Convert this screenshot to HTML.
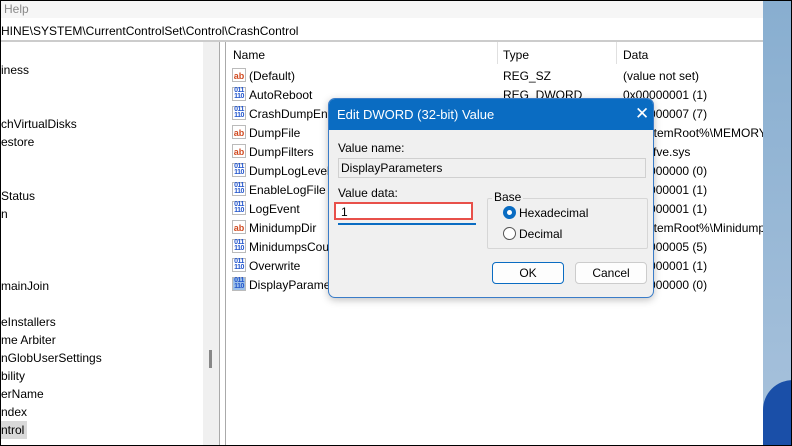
<!DOCTYPE html>
<html><head><style>
*{margin:0;padding:0;box-sizing:border-box}
body{width:792px;height:446px;overflow:hidden;font-family:"Liberation Sans",sans-serif;font-size:12px;color:#000;background:#fff;position:relative}
.a{position:absolute;white-space:nowrap}
.ic{position:absolute;width:14px;height:14px;font-size:9px;font-weight:bold;line-height:14px;text-align:center;border:1px solid #bbb;background:#fff}
.ab{color:#d04a20}
.bn{color:#2255cc;font-size:7px;line-height:6px;letter-spacing:-0.5px}
</style></head><body>
<div class="a" style="left:1px;top:1px;width:762px;height:17px;background:#f6f6f6"></div>
<div class="a" style="left:4px;top:2px;color:#888">Help</div>
<div class="a" style="left:1px;top:18px;width:762px;height:24px;background:#fff;border-bottom:2px solid #ccc"></div>
<div class="a" style="left:1px;top:24px">HINE\SYSTEM\CurrentControlSet\Control\CrashControl</div>
<div class="a" style="left:203px;top:42px;width:16px;height:404px;background:#f0f0f0"></div>
<div class="a" style="left:209px;top:350px;width:3px;height:18px;background:#888"></div>
<div class="a" style="left:219px;top:42px;width:7px;height:404px;background:#fff;border-left:1px solid #aaa;border-right:1px solid #aaa"></div>
<div class="a" style="left:1px;top:63px">iness</div>
<div class="a" style="left:1px;top:117px">chVirtualDisks</div>
<div class="a" style="left:1px;top:135px">estore</div>
<div class="a" style="left:1px;top:189px">Status</div>
<div class="a" style="left:1px;top:207px">n</div>
<div class="a" style="left:1px;top:279px">mainJoin</div>
<div class="a" style="left:1px;top:315px">eInstallers</div>
<div class="a" style="left:1px;top:333px">me Arbiter</div>
<div class="a" style="left:1px;top:351px">nGlobUserSettings</div>
<div class="a" style="left:1px;top:369px">bility</div>
<div class="a" style="left:1px;top:387px">erName</div>
<div class="a" style="left:1px;top:405px">ndex</div>
<div class="a" style="left:1px;top:421px;width:26px;height:18px;background:#d9d9d9"></div>
<div class="a" style="left:1px;top:423px">ntrol</div>
<div class="a" style="left:233px;top:48px">Name</div>
<div class="a" style="left:497px;top:42px;width:1px;height:22px;background:#e0e0e0"></div>
<div class="a" style="left:503px;top:48px">Type</div>
<div class="a" style="left:616px;top:42px;width:1px;height:22px;background:#e0e0e0"></div>
<div class="a" style="left:623px;top:48px">Data</div>
<div id="rows"></div>
<script>
var r=[["ab","(Default)","REG_SZ","(value not set)"],["b","AutoReboot","REG_DWORD","0x00000001 (1)"],["b","CrashDumpEnabled","","0x00000007 (7)"],["ab","DumpFile","","%SystemRoot%\\MEMORY.DMP"],["ab","DumpFilters","","dumpfve.sys"],["b","DumpLogLevel","","0x00000000 (0)"],["b","EnableLogFile","","0x00000001 (1)"],["b","LogEvent","","0x00000001 (1)"],["ab","MinidumpDir","","%SystemRoot%\\Minidump"],["b","MinidumpsCount","","0x00000005 (5)"],["b","Overwrite","","0x00000001 (1)"],["b","DisplayParameters","","0x00000000 (0)"]];
var h="";r.forEach(function(x,i){var y=68+i*19;
h+='<div class="ic '+(x[0]=="ab"?"ab":"bn")+'" style="left:232px;top:'+y+'px;'+(i==11?'background:#9cc0e8;':'')+'">'+(x[0]=="ab"?"ab":"011<br>110")+'</div>';
h+='<div class="a" style="left:249px;top:'+(y+1)+'px">'+x[1]+'</div>';
if(x[2])h+='<div class="a" style="left:503px;top:'+(y+1)+'px">'+x[2]+'</div>';
h+='<div class="a" style="left:623px;top:'+(y+1)+'px">'+x[3]+'</div>';});
document.getElementById("rows").innerHTML=h;
</script>
<div class="a" style="left:763px;top:0;width:29px;height:446px;background:linear-gradient(#88aed0,#a8c2dc);overflow:hidden"><div class="a" style="left:0;top:380px;width:60px;height:80px;background:#1a4fa8;border-radius:30px 0 0 0"></div></div>
<div class="a" style="left:0;top:0;width:792px;height:446px;border:1px solid #000"></div>
<div class="a" style="left:328px;top:98px;width:326px;height:200px;background:#f0f0f0;border:1px solid #3a7cc8;border-radius:7px;overflow:hidden;box-shadow:0 2px 8px rgba(0,0,0,.25)">
<div class="a" style="left:0;top:0;width:326px;height:31px;background:#0a6cc2"></div>
<div class="a" style="left:8px;top:8px;color:#fff;font-size:13px">Edit DWORD (32-bit) Value</div>
<div class="a" style="left:306px;top:5px;color:#fff;font-size:17px">✕</div>
<div class="a" style="left:9px;top:42px">Value name:</div>
<div class="a" style="left:9px;top:59px;width:308px;height:20px;background:#f0f0f0;border:1px solid #d0d0d0"></div>
<div class="a" style="left:12px;top:62px">DisplayParameters</div>
<div class="a" style="left:9px;top:87px">Value data:</div>
<div class="a" style="left:5px;top:103px;width:139px;height:18px;background:#fff;border:2px solid #e8504a"></div>
<div class="a" style="left:12px;top:106px">1</div>
<div class="a" style="left:9px;top:124px;width:138px;height:2px;background:#0a6cc2"></div>
<div class="a" style="left:158px;top:99px;width:161px;height:51px;border:1px solid #d6d6d6;border-radius:2px"></div>
<div class="a" style="left:163px;top:91px;background:#f0f0f0;padding:0 2px">Base</div>
<div class="a" style="left:174px;top:107px;width:13px;height:13px;border-radius:50%;background:#0a6cc2"><div style="margin:4px;width:5px;height:5px;border-radius:50%;background:#fff"></div></div>
<div class="a" style="left:190px;top:107px">Hexadecimal</div>
<div class="a" style="left:174px;top:128px;width:13px;height:13px;border-radius:50%;border:1px solid #555;background:#fff"></div>
<div class="a" style="left:190px;top:128px">Decimal</div>
<div class="a" style="left:163px;top:163px;width:72px;height:22px;background:#fdfdfd;border:1px solid #0a6cc2;border-radius:4px;text-align:center;line-height:20px">OK</div>
<div class="a" style="left:246px;top:163px;width:72px;height:22px;background:#fdfdfd;border:1px solid #ccc;border-radius:4px;text-align:center;line-height:20px">Cancel</div>
</div>
</body></html>
